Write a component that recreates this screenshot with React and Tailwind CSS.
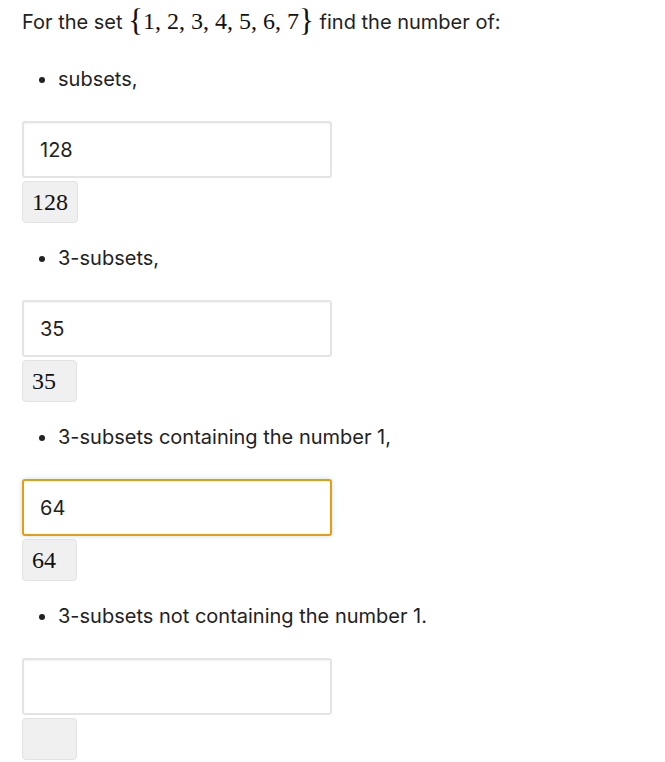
import React from "react";

const items = [
  { label: "subsets,", value: "128", shown: "128" },
  { label: "3-subsets,", value: "35", shown: "35" },
  { label: "3-subsets containing the number 1,", value: "64", shown: "64", focus: true },
  { label: "3-subsets not containing the number 1.", value: "", shown: "" },
];

const mathFont = { fontFamily: '"Liberation Serif", "DejaVu Serif", serif' };

const Question = ({ item, first }) => (
  <div>
    <ul className={"pl-[36px] list-disc mb-[30px] " + (first ? "mt-[32px]" : "mt-[23px]")}>
      <li className="h-[24px] leading-[24px]">{item.label}</li>
    </ul>
    <div
      className={
        "h-[57px] w-[310px] rounded-[3px] bg-white flex items-center px-[16px] " +
        (item.focus
          ? "border-2 border-[#e89e0b] shadow-[0_0_5px_rgba(120,180,220,0.45)]"
          : "border-2 border-[#e4e4e4] shadow-[inset_0_1px_2px_rgba(0,0,0,0.05)]")
      }
    >
      <span className="text-[20px] text-[#222]">{item.value}</span>
    </div>
    <div className="mt-[3px] h-[42px] min-w-[55px] w-fit px-[9px] rounded-[4px] border border-[#e2e2e2] bg-[#f0f0f0] flex items-center">
      <span className="text-[24px] text-[#111] font-['Liberation_Serif',serif]" style={mathFont}>
        {item.shown}
      </span>
    </div>
  </div>
);

export default function App() {
  return (
    <div className="px-[22px] pt-[8px] text-[20px] text-[#222] font-['Inter','Noto_Sans',sans-serif] bg-white min-h-[762px]">
      <p className="h-[27px] flex items-center whitespace-nowrap">
        For the set&nbsp;
        <span className="text-[24px] text-[#111]" style={mathFont}>
          <span className="text-[31px] align-[-2px]">{"{"}</span>1, 2, 3, 4, 5, 6, 7<span className="text-[31px] align-[-2px]">{"}"}</span>
        </span>
        &nbsp;find the number of:
      </p>
      {items.map((it, i) => (
        <Question key={i} item={it} first={i === 0} />
      ))}
    </div>
  );
}
